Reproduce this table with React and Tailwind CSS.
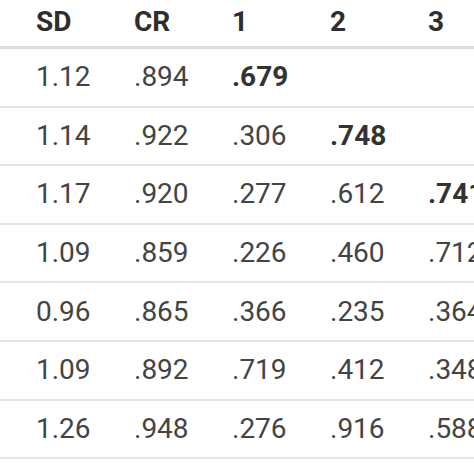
import React from "react";

const head = ["SD", "CR", "1", "2", "3"];

// [value, bold]
const rows = [
  [["1.12"], [".894"], [".679", true], [""], [""]],
  [["1.14"], [".922"], [".306"], [".748", true], [""]],
  [["1.17"], [".920"], [".277"], [".612"], [".741", true]],
  [["1.09"], [".859"], [".226"], [".460"], [".712"]],
  [["0.96"], [".865"], [".366"], [".235"], [".364"]],
  [["1.09"], [".892"], [".719"], [".412"], [".348"]],
  [["1.26"], [".948"], [".276"], [".916"], [".588"]],
];

export default function App() {
  return (
    <div
      className="w-[474px] h-[474px] overflow-hidden bg-white"
      style={{ fontFamily: "Roboto, sans-serif" }}
    >
      <div className="w-[560px]">
        <div className="flex h-[49px] pl-[36px] pt-[1px] border-b-[3px] border-[#dcdcdc] text-[28px] font-bold text-[#2e2e2e]">
          {head.map((h) => (
            <div key={h} className="w-[98px] shrink-0">
              {h}
            </div>
          ))}
        </div>
        {rows.map((r, i) => (
          <div
            key={i}
            className="flex items-center h-[58.6px] pl-[36px] border-b-2 border-[#e4e4e4] text-[28px] text-[#444]"
          >
            {r.map(([v, b], j) => (
              <div
                key={j}
                className={
                  b
                    ? "w-[98px] shrink-0 font-bold text-[#333]"
                    : "w-[98px] shrink-0"
                }
              >
                {v}
              </div>
            ))}
          </div>
        ))}
      </div>
    </div>
  );
}
